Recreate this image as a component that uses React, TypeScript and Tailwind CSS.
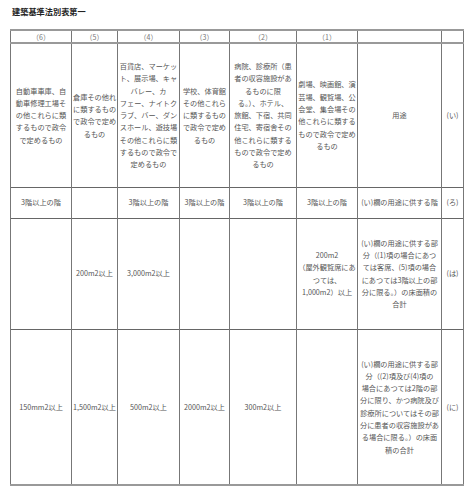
import React from 'react';

type Cell = string[];

const widths = [61, 46, 62, 50, 67, 61, 84, 22];

const header: Cell[] = [['（6）'], ['（5）'], ['（4）'], ['（3）'], ['（2）'], ['（1）'], [''], ['']];

const rows: { h: string; cells: Cell[] }[] = [
    {
        h: 'h-[144px]',
        cells: [
            ['自動車車庫、自', '動車修理工場そ', 'の他これらに類', 'するもので政令', 'で定めるもの'],
            ['倉庫その他れ', 'に類するもの', 'で政令で定め', 'るもの'],
            ['百貨店、マーケッ', 'ト、展示場、キャ', 'バレー、カ', 'フェー、ナイトク', 'ラブ、バー、ダン', 'スホール、遊技場', 'その他これらに類', 'するもので政令で', '定めるもの'],
            ['学校、体育館', 'その他これら', 'に類するもの', 'で政令で定め', 'るもの'],
            ['病院、診療所（患', '者の収容施設があ', 'るものに限', 'る。）、ホテル、', '旅館、下宿、共同', '住宅、寄宿舎その', '他これらに類する', 'もので政令で定め', 'るもの'],
            ['劇場、映画館、演', '芸場、観覧場、公', '会堂、集会場その', '他これらに類する', 'もので政令で定め', 'るもの'],
            ['用途'],
            ['(い)'],
        ],
    },
    {
        h: 'h-[31px]',
        cells: [
            ['3階以上の階'],
            [''],
            ['3階以上の階'],
            ['3階以上の階'],
            ['3階以上の階'],
            ['3階以上の階'],
            ['(い)欄の用途に供する階'],
            ['(ろ)'],
        ],
    },
    {
        h: 'h-[111px]',
        cells: [
            [''],
            ['200m2以上'],
            ['3,000m2以上'],
            [''],
            [''],
            ['200m2', '（屋外観覧席にあ', 'つては、', '1,000m2）以上'],
            ['(い)欄の用途に供する部', '分（(1)項の場合にあつ', 'ては客席、(5)項の場合', 'にあつては3階以上の部', '分に限る。）の床面積の', '合計'],
            ['(は)'],
        ],
    },
    {
        h: 'h-[156px]',
        cells: [
            ['150mm2以上'],
            ['1,500m2以上'],
            ['500m2以上'],
            ['2000m2以上'],
            ['300m2以上'],
            [''],
            ['(い)欄の用途に供する部', '分（(2)項及び(4)項の', '場合にあつては2階の部', '分に限り、かつ病院及び', '診療所についてはその部', '分に患者の収容施設があ', 'る場合に限る。）の床面', '積の合計'],
            ['(に)'],
        ],
    },
];

function Lines({ lines }: { lines: Cell }) {
    return (
        <>
            {lines.map((l, i) => (
                <React.Fragment key={i}>
                    {i > 0 && <br />}
                    {l}
                </React.Fragment>
            ))}
        </>
    );
}

export default function App() {
    return (
        <div
            className="w-[474px] h-[494px] bg-white text-[#555]"
            style={{ fontFamily: '"Noto Sans CJK JP", "Noto Sans", sans-serif' }}
        >
            <div className="pt-[5px] pl-[12px] h-[29px]">
                <h1 className="text-[8.2px] font-bold leading-[12px] text-[#222]">建築基準法別表第一</h1>
            </div>

            <table className="ml-[10px] table-fixed border-collapse w-[453px] border-y-2 border-[#999]">
                <colgroup>
                    {widths.map((w, i) => (
                        <col key={i} style={{ width: w }} />
                    ))}
                </colgroup>
                <thead>
                    <tr className="h-[13px] border-b-2 border-[#999]">
                        {header.map((c, i) => (
                            <th
                                key={i}
                                className="border-x border-[#777] p-0 text-center align-middle text-[7px] font-normal leading-[10px] text-[#777] whitespace-nowrap"
                            >
                                <Lines lines={c} />
                            </th>
                        ))}
                    </tr>
                </thead>
                <tbody>
                    {rows.map((r, ri) => (
                        <tr key={ri} className={`${r.h} border-t border-[#666]`}>
                            {r.cells.map((c, ci) => (
                                <td
                                    key={ci}
                                    className="border-x border-[#777] px-[1px] py-0 text-center align-middle text-[7.2px] leading-[12.3px] whitespace-nowrap overflow-hidden"
                                >
                                    <Lines lines={c} />
                                </td>
                            ))}
                        </tr>
                    ))}
                </tbody>
            </table>
        </div>
    );
}
